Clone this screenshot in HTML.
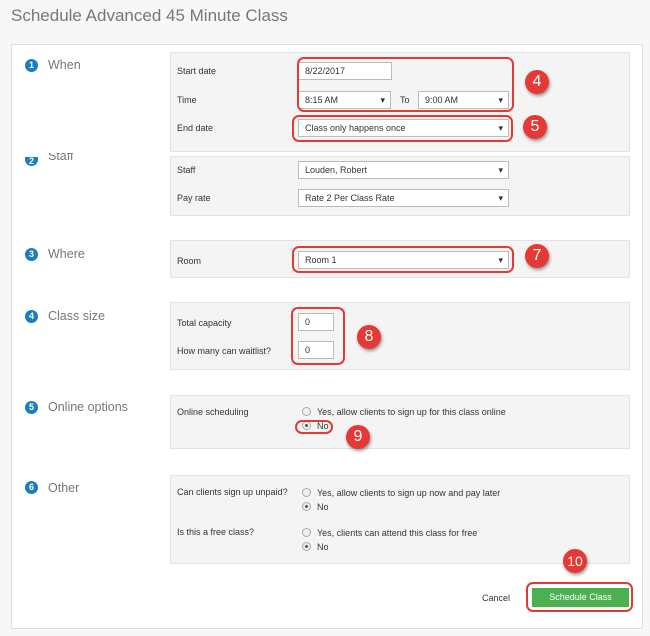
<!DOCTYPE html><html><head><style>
body{margin:0;width:650px;height:636px;background:#f7f7f7;font-family:"Liberation Sans",sans-serif;position:relative;overflow:hidden}
.a{position:absolute}
h1{position:absolute;left:11px;top:6px;margin:0;font-weight:normal;font-size:17px;color:#777}
.card{left:11px;top:44px;width:630px;height:583px;background:#fff;border:1px solid #ddd;border-radius:2px}
.box{background:#f4f4f4;border:1px solid #e3e3e3;left:170px;width:458px}
.n{width:13px;height:13px;border-radius:50%;background:#1a7dc4;color:#fff;font-size:9px;font-weight:bold;text-align:center;line-height:13px;left:25px}
.t{left:48px;font-size:12.5px;color:#777}
.l{left:177px;font-size:9px;color:#333}
.in{background:#fff;border:1px solid #bbb;font-size:9px;color:#333;box-sizing:border-box;padding-left:6px;line-height:16px}
.s:after{content:"▾";position:absolute;right:5px;top:0;font-size:9px}
.r{left:302px;font-size:9px;color:#333}
.r i{display:inline-block;width:7px;height:7px;border:1px solid #aaa;border-radius:50%;background:#eee;margin-right:6px;vertical-align:-1px;position:relative}
.r i.c:after{content:"";position:absolute;left:2px;top:2px;width:3px;height:3px;border-radius:50%;background:#555}
.o{border:2px solid #e53935;border-radius:7px;box-sizing:border-box}
.b{width:24px;height:24px;border-radius:50%;background:#e53935;color:#fff;font-size:16px;text-align:center;line-height:24px;box-shadow:1px 2px 3px rgba(0,0,0,.4)}
</style></head><body>
<h1>Schedule Advanced 45 Minute Class</h1>
<div class="a card"></div>
<div class="a box" style="top:52px;height:98px"></div>
<div class="a n" style="top:59px">1</div><div class="a t" style="top:58px">When</div>
<div class="a l" style="top:66px">Start date</div><div class="a in" style="left:298px;top:62px;width:94px;height:18px">8/22/2017</div>
<div class="a l" style="top:95px">Time</div><div class="a in s" style="left:298px;top:91px;width:93px;height:18px">8:15 AM</div>
<div class="a l" style="left:400px;top:95px">To</div><div class="a in s" style="left:418px;top:91px;width:91px;height:18px">9:00 AM</div>
<div class="a l" style="top:123px">End date</div><div class="a in s" style="left:298px;top:119px;width:211px;height:18px">Class only happens once</div>
<div class="a box" style="top:156px;height:58px"></div>
<div class="a n" style="top:157px;height:9px;line-height:9px;border-radius:0 0 7px 7px">2</div><div class="a t" style="top:153px;height:16px;overflow:hidden"><span style="position:relative;top:-4px">Staff</span></div>
<div class="a l" style="top:165px">Staff</div><div class="a in s" style="left:298px;top:161px;width:211px;height:18px">Louden, Robert</div>
<div class="a l" style="top:193px">Pay rate</div><div class="a in s" style="left:298px;top:189px;width:211px;height:18px">Rate 2 Per Class Rate</div>
<div class="a box" style="top:240px;height:36px"></div>
<div class="a n" style="top:248px">3</div><div class="a t" style="top:247px">Where</div>
<div class="a l" style="top:256px">Room</div><div class="a in s" style="left:298px;top:251px;width:211px;height:18px">Room 1</div>
<div class="a box" style="top:302px;height:66px"></div>
<div class="a n" style="top:310px">4</div><div class="a t" style="top:309px">Class size</div>
<div class="a l" style="top:318px">Total capacity</div><div class="a in" style="left:298px;top:313px;width:36px;height:18px">0</div>
<div class="a l" style="top:346px">How many can waitlist?</div><div class="a in" style="left:298px;top:341px;width:36px;height:18px">0</div>
<div class="a box" style="top:395px;height:52px"></div>
<div class="a n" style="top:401px">5</div><div class="a t" style="top:400px">Online options</div>
<div class="a l" style="top:407px">Online scheduling</div>
<div class="a r" style="top:407px"><i></i>Yes, allow clients to sign up for this class online</div>
<div class="a r" style="top:421px"><i class="c"></i>No</div>
<div class="a box" style="top:475px;height:87px"></div>
<div class="a n" style="top:481px">6</div><div class="a t" style="top:481px">Other</div>
<div class="a l" style="top:487px">Can clients sign up unpaid?</div>
<div class="a r" style="top:488px"><i></i>Yes, allow clients to sign up now and pay later</div>
<div class="a r" style="top:502px"><i class="c"></i>No</div>
<div class="a l" style="top:527px">Is this a free class?</div>
<div class="a r" style="top:528px"><i></i>Yes, clients can attend this class for free</div>
<div class="a r" style="top:542px"><i class="c"></i>No</div>
<div class="a" style="left:482px;top:593px;font-size:9px;color:#333">Cancel</div>
<div class="a" style="left:532px;top:588px;width:97px;height:19px;background:#4caf50;color:#fff;font-size:9px;text-align:center;line-height:19px">Schedule Class</div>
<div class="a o" style="left:297px;top:57px;width:217px;height:55px"></div>
<div class="a o" style="left:292px;top:115px;width:221px;height:27px"></div>
<div class="a o" style="left:292px;top:246px;width:222px;height:27px"></div>
<div class="a o" style="left:291px;top:307px;width:54px;height:58px"></div>
<div class="a o" style="left:295px;top:420px;width:38px;height:14px"></div>
<div class="a o" style="left:526px;top:582px;width:107px;height:30px"></div>
<div class="a b" style="left:525px;top:70px">4</div>
<div class="a b" style="left:523px;top:115px">5</div>
<div class="a b" style="left:525px;top:244px">7</div>
<div class="a b" style="left:357px;top:325px">8</div>
<div class="a b" style="left:346px;top:425px">9</div>
<div class="a b" style="left:563px;top:549px;font-size:14px">10</div>
</body></html>
